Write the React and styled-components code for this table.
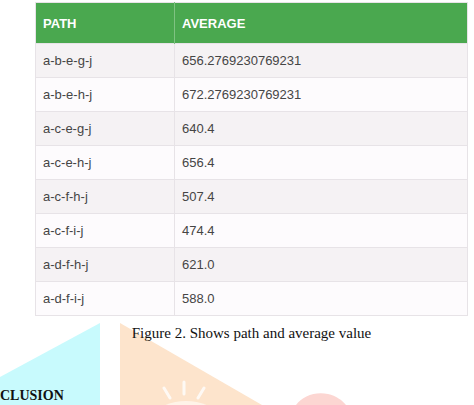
import React from "react";
import styled, { createGlobalStyle } from "styled-components";

const Global = createGlobalStyle`
  html, body { margin: 0; padding: 0; background: #ffffff; }
  body { width: 474px; height: 405px; overflow: hidden; position: relative; }
`;

const Page = styled.div`
  position: relative;
  width: 474px;
  height: 405px;
  overflow: hidden;
  background: #fff;
`;

const Watermark = styled.svg`
  position: absolute;
  left: 0;
  top: 0;
  z-index: 0;
`;

const Content = styled.div`
  position: relative;
  z-index: 1;
  display: flex;
  flex-direction: column;
  padding-top: 2px;
`;

const TableWrap = styled.div`
  margin-left: 35px;
  width: 433px;
`;

const Table = styled.table`
  width: 100%;
  border-collapse: collapse;
  font-family: "Liberation Sans", Arial, sans-serif;
  font-size: 13px;
  table-layout: fixed;
  border: 1px solid #e7e3e7;
`;

const HeadCell = styled.th`
  background: #4aa84f;
  color: #ffffff;
  font-weight: bold;
  text-align: left;
  height: 41px;
  padding: 0 7px;
  box-sizing: border-box;
  border-right: 1px solid #7fc282;
  &:last-child { border-right: none; }
`;

const Row = styled.tr`
  background: ${(p) => (p.$odd ? "#f5f2f4" : "#fdfbfd")};
  height: 34px;
`;

const Cell = styled.td`
  color: #454545;
  padding: 0 7px;
  border-top: 1px solid #e7e3e7;
  border-right: 1px solid #e7e3e7;
  &:last-child { border-right: none; }
`;

const Caption = styled.p`
  margin: 8px 0 0 35px;
  width: 433px;
  text-align: center;
  font-family: "Liberation Serif", "Times New Roman", serif;
  font-size: 15px;
  line-height: 18px;
  color: #111;
`;

const Heading = styled.h3`
  margin: 46px 0 0 0;
  font-family: "Liberation Serif", "Times New Roman", serif;
  font-weight: bold;
  font-size: 14px;
  line-height: 16px;
  color: #111;
`;

const rows = [
  ["a-b-e-g-j", "656.2769230769231"],
  ["a-b-e-h-j", "672.2769230769231"],
  ["a-c-e-g-j", "640.4"],
  ["a-c-e-h-j", "656.4"],
  ["a-c-f-h-j", "507.4"],
  ["a-c-f-i-j", "474.4"],
  ["a-d-f-h-j", "621.0"],
  ["a-d-f-i-j", "588.0"],
];

export default function App() {
  return (
    <Page>
      <Global />
      <Watermark width="474" height="405" viewBox="0 0 474 405">
        <polygon points="100,323 100,405 0,405 0,377" fill="#c8fafd" />
        <polygon points="120,323 262,405 120,405" fill="#fde4cc" />
        <g stroke="#ffffff" strokeWidth="3" strokeLinecap="round" opacity="0.8">
          <line x1="184" y1="382" x2="184" y2="394" />
          <line x1="164" y1="388" x2="170" y2="398" />
          <line x1="204" y1="388" x2="198" y2="398" />
        </g>
        <ellipse cx="186" cy="414" rx="28" ry="13" fill="#fff3e8" />
        <path d="M296 405 C 302 396, 316 391, 328 394 C 336 396, 342 400, 346 405 Z" fill="#fcd6d2" />
      </Watermark>
      <Content>
        <TableWrap>
          <Table>
            <colgroup>
              <col style={{ width: "139px" }} />
              <col />
            </colgroup>
            <thead>
              <tr>
                <HeadCell>PATH</HeadCell>
                <HeadCell>AVERAGE</HeadCell>
              </tr>
            </thead>
            <tbody>
              {rows.map(([p, v], i) => (
                <Row key={p} $odd={i % 2 === 0}>
                  <Cell>{p}</Cell>
                  <Cell>{v}</Cell>
                </Row>
              ))}
            </tbody>
          </Table>
        </TableWrap>
        <Caption>Figure 2. Shows path and average value</Caption>
        <Heading>CLUSION</Heading>
      </Content>
    </Page>
  );
}
